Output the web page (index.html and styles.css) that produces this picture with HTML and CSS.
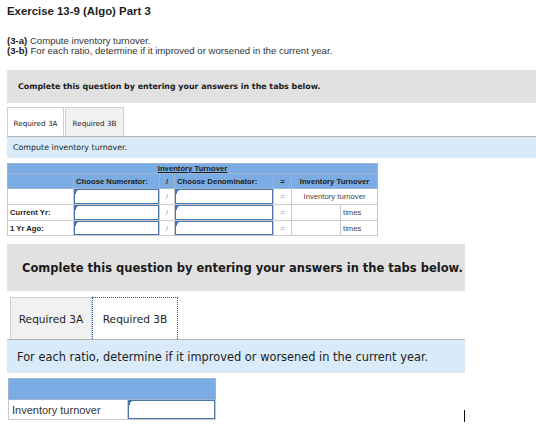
FILE: index.html
```html
<!DOCTYPE html>
<html>
<head>
<meta charset="utf-8">
<link rel="stylesheet" href="styles.css">
</head>
<body>
<div class="page">
  <h1 class="title">Exercise 13-9 (Algo) Part 3</h1>
  <div class="instr">
    <p><b>(3-a)</b> Compute inventory turnover.</p>
    <p><b>(3-b)</b> For each ratio, determine if it improved or worsened in the current year.</p>
  </div>

  <div class="notice">Complete this question by entering your answers in the tabs below.</div>
  <div class="tabs">
    <div class="tab active">Required 3A</div>
    <div class="tab">Required 3B</div>
  </div>
  <div class="prompt">Compute inventory turnover.</div>

  <table class="grid">
    <colgroup>
      <col style="width:66px"><col style="width:86px"><col style="width:15px"><col style="width:99px"><col style="width:18px"><col style="width:49px"><col style="width:37px">
    </colgroup>
    <tr class="h1"><th colspan="7"><u>Inventory Turnover</u></th></tr>
    <tr class="h2">
      <th></th>
      <th class="left">Choose Numerator:</th>
      <th>/</th>
      <th class="left">Choose Denominator:</th>
      <th>=</th>
      <th colspan="2">Inventory Turnover</th>
    </tr>
    <tr class="r">
      <td></td>
      <td class="in"><span class="box"></span></td>
      <td class="op">/</td>
      <td class="in"><span class="box"></span></td>
      <td class="op">=</td>
      <td colspan="2" class="center">Inventory turnover</td>
    </tr>
    <tr class="r">
      <td class="lbl">Current Yr:</td>
      <td class="in"><span class="box"></span></td>
      <td class="op">/</td>
      <td class="in"><span class="box"></span></td>
      <td class="op">=</td>
      <td></td>
      <td class="unit">times</td>
    </tr>
    <tr class="r last">
      <td class="lbl">1 Yr Ago:</td>
      <td class="in"><span class="box"></span></td>
      <td class="op">/</td>
      <td class="in"><span class="box"></span></td>
      <td class="op">=</td>
      <td></td>
      <td class="unit">times</td>
    </tr>
  </table>

  <div class="big">
    <div class="notice2">Complete this question by entering your answers in the tabs below.</div>
    <div class="tabs2">
      <div class="tab2">Required 3A</div>
      <div class="tab2 active2">Required 3B</div>
    </div>
    <div class="prompt2">For each ratio, determine if it improved or worsened in the current year.</div>
    <table class="grid2">
      <colgroup><col style="width:119px"><col style="width:88px"></colgroup>
      <tr class="hh"><th colspan="2"></th></tr>
      <tr class="rr">
        <td class="lbl2">Inventory turnover</td>
        <td class="in"><span class="box"></span></td>
      </tr>
    </table>
  </div>
  <span class="cursor"></span>
</div>
</body>
</html>
```
FILE: styles.css
```css
* { box-sizing: border-box; }
html, body { margin: 0; padding: 0; background: #fff; }
body { width: 536px; height: 424px; overflow: hidden; }
.page { position: relative; padding: 3px 0 0 7px; font-family: "Liberation Sans", Arial, sans-serif; color: #222; }

.title { margin: 0; font-size: 11.4px; line-height: 16px; font-weight: bold; color: #1d1d1d; }

.instr { margin-top: 17px; font-size: 9.6px; line-height: 10px; color: #333; }
.instr p { margin: 0; }
.instr b { color: #222; }

.notice {
  margin-top: 14px; height: 33px; padding-left: 11px;
  display: flex; align-items: center; white-space: nowrap;
  background: #e1e1e1; font-family: "DejaVu Sans", Verdana, sans-serif;
  font-weight: bold; font-size: 7.9px; color: #1a1a1a;
}

.tabs { margin-top: 4px; display: flex; border-bottom: 1px solid #b4b4b4; }
.tab {
  height: 29px; padding-top: 2px; display: flex; align-items: center; justify-content: center;
  border: 1px solid #cfcfcf; border-bottom: none; background: #f1f1f1;
  font-family: "DejaVu Sans", Verdana, sans-serif; font-size: 7.2px; color: #222;
}
.tab:first-child { width: 57px; }
.tab:nth-child(2) { width: 59px; margin-left: 1px; }
.tab.active { background: #fff; }

.prompt {
  height: 21px; padding-left: 6px; display: flex; align-items: center;
  background: #d9ebf9; font-family: "DejaVu Sans", Verdana, sans-serif; font-size: 7.9px; color: #222;
}

.grid {
  margin-top: 5px; border-collapse: collapse; table-layout: fixed; width: 370px;
  font-size: 7.7px; border: 1px solid #a9a9a9;
}
.grid th, .grid td { padding: 0; border: 1px solid #c9c9c9; }
.grid th { background: #7badE4; font-weight: bold; color: #1d1d1d; border-color: #9cb6d2; }
.grid .h1 th { height: 10px; line-height: 9px; text-align: center; border-bottom-color: #9cb6d2; }
.grid .h2 th { height: 15px; text-align: center; }
.grid th.left { text-align: left; padding-left: 2px; }
.grid .r td { height: 16px; }
.grid .r.last td { height: 15px; }
.grid td.lbl { font-weight: bold; padding-left: 2px; color: #1d1d1d; }
.grid td.op { text-align: center; color: #8a8a8a; }
.grid td.center { text-align: center; color: #444; }
.grid td.unit { padding-left: 2px; color: #444; }

td.in { position: relative; padding: 0; }
.box {
  position: absolute; inset: 0; border: 1px solid #4d76a8; background: #fff;
}
.box::before {
  content: ""; position: absolute; left: 0; top: 0;
  border-top: 2px solid #3f6fb5; border-right: 2px solid transparent;
  border-left: 1px solid #3f6fb5; width: 0; height: 2px;
}

.big { margin-top: 8px; width: 458px; }
.notice2 {
  height: 47px; padding-left: 15px; display: flex; align-items: center; white-space: nowrap;
  background: #e1e1e1; font-family: "DejaVu Sans", Verdana, sans-serif;
  font-weight: bold; font-size: 11.5px; color: #1a1a1a;
}
.tabs2 { margin-top: 6px; padding-left: 3px; display: flex; border-bottom: 1px solid #b4b4b4; }
.tab2 {
  height: 42px; display: flex; align-items: center; justify-content: center;
  border: 1px solid #cfcfcf; border-bottom: none; background: #f1f1f1;
  font-family: "DejaVu Sans", Verdana, sans-serif; font-size: 10.6px; color: #222;
  width: 82px;
}
.tab2.active2 { width: 86px; background: #fff; border: 1px dotted #2d5fb0; border-bottom: none; }
.prompt2 {
  height: 33px; padding-left: 10px; display: flex; align-items: center; white-space: nowrap;
  background: #d9ebf9; font-family: "DejaVu Sans", Verdana, sans-serif; font-size: 11.4px; color: #222;
}

.grid2 {
  margin: 5px 0 0 1px; border-collapse: collapse; table-layout: fixed; width: 207px;
  font-size: 11px; border: 1px solid #a9a9a9;
}
.grid2 th, .grid2 td { padding: 0; border: 1px solid #c9c9c9; }
.grid2 .hh th { height: 21px; background: #7badE4; border-color: #9cb6d2; }
.grid2 .rr td { height: 20px; }
.grid2 td.lbl2 { padding-left: 3px; color: #333; }

.cursor { position: absolute; left: 464px; top: 410px; width: 1px; height: 12px; background: #111; }
```
